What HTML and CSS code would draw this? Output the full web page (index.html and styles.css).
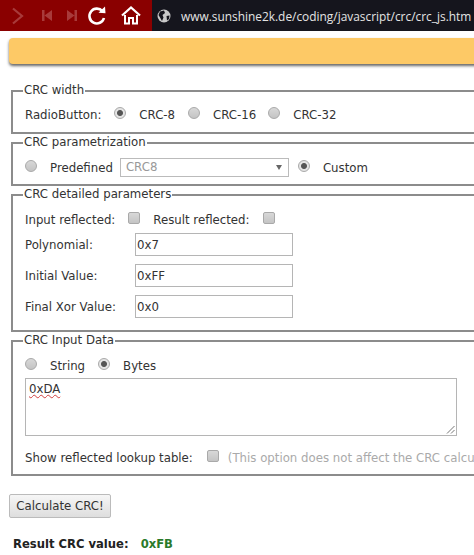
FILE: index.html
```html
<!DOCTYPE html>
<html lang="en">
<head>
    <meta charset="UTF-8">
    <title>CRC Calculator</title>
    <link rel="stylesheet" href="styles.css">
</head>
<body>
    <div class="toolbar">
        <div class="nav-buttons">
            <svg class="icon-forward" width="14" height="18" viewBox="0 0 14 18"><path d="M2 1.500 L11 9 L2 16.500" fill="none" stroke="#a83a3a" stroke-width="2.200"/></svg>
            <svg class="icon-skip-back" width="10" height="11" viewBox="0 0 10 11"><path d="M0 0h2.500v11H0zM10 0v11L2.500 5.500z" fill="#a83a3a"/></svg>
            <svg class="icon-skip-next" width="10" height="11" viewBox="0 0 10 11"><path d="M10 0H7.500v11H10zM0 0v11l7.500-5.500z" fill="#a83a3a"/></svg>
            <svg class="icon-reload" width="20" height="20" viewBox="0 0 20 20"><path d="M15.500 5.200 A7.400 7.400 0 1 0 17 12" fill="none" stroke="#fff" stroke-width="2.600"/><path d="M11.500 6.800 L18.500 7.200 L18 0.500z" fill="#fff"/></svg>
            <svg class="icon-home" width="20" height="19" viewBox="0 0 20 19"><path d="M1 9.500 L10 1.500 L19 9.500" fill="none" stroke="#fff" stroke-width="2.200"/><path d="M4 9 V17.500 H8 V12 H12 V17.500 H16 V9" fill="none" stroke="#fff" stroke-width="2"/></svg>
        </div>
        <div class="url-bar">
            <svg class="icon-globe" width="14" height="14" viewBox="0 0 14 14"><circle cx="7" cy="7" r="6.500" fill="#c9c9c9"/><path d="M3 2.500 L7 1.500 L8 4 L5.500 6 L6.500 8.500 L5 12 L3 8.500 L1.500 6z M9.500 7 L12.500 6.500 L12 10 L10 11.500z" fill="#15151d"/></svg>
            <span class="url-text">www.sunshine2k.de/coding/javascript/crc/crc_js.htm</span>
        </div>
    </div>

    <div class="page">
        <div class="banner"></div>

        <fieldset class="group group-width">
            <legend>CRC width</legend>
            <div class="row">
                <span class="row-label">RadioButton:</span>
                <input type="radio" name="width" checked>
                <label class="gap-crc8">CRC-8</label>
                <input type="radio" name="width">
                <label class="gap-crc16">CRC-16</label>
                <input type="radio" name="width">
                <label>CRC-32</label>
            </div>
        </fieldset>

        <fieldset class="group group-param">
            <legend>CRC parametrization</legend>
            <div class="row row-param">
                <input type="radio" name="param">
                <label class="gap-predefined">Predefined</label>
                <div class="select-box">
                    <span>CRC8</span>
                    <span class="select-arrow"></span>
                </div>
                <input type="radio" name="param" checked>
                <label>Custom</label>
            </div>
        </fieldset>

        <fieldset class="group group-detail">
            <legend>CRC detailed parameters</legend>
            <div class="row row-checks">
                <span>Input reflected:</span>
                <input type="checkbox">
                <span>Result reflected:</span>
                <input type="checkbox">
            </div>
            <div class="field-row">
                <label>Polynomial:</label>
                <input type="text" class="text-input" value="0x7">
            </div>
            <div class="field-row">
                <label>Initial Value:</label>
                <input type="text" class="text-input" value="0xFF">
            </div>
            <div class="field-row">
                <label>Final Xor Value:</label>
                <input type="text" class="text-input" value="0x0">
            </div>
        </fieldset>

        <fieldset class="group group-data">
            <legend>CRC Input Data</legend>
            <div class="row row-source">
                <input type="radio" name="data">
                <label class="gap-string">String</label>
                <input type="radio" name="data" checked>
                <label>Bytes</label>
            </div>
            <div class="data-box">
                <span class="spell-error">0xDA</span>
                <svg class="resize-grip" width="9" height="9" viewBox="0 0 9 9"><path d="M1 8.500 L8.500 1 M5 8.500 L8.500 5" stroke="#777" stroke-width="1"/></svg>
            </div>
            <div class="row row-lookup">
                <span>Show reflected lookup table:</span>
                <input type="checkbox">
                <span class="muted">(This option does not affect the CRC calculation, only the displayed result.)</span>
            </div>
        </fieldset>

        <button type="button" class="calc-button">Calculate CRC!</button>

        <div class="result">
            <span>Result CRC value:</span>
            <span class="result-value">0xFB</span>
        </div>
    </div>
</body>
</html>
```

FILE: styles.css
```css
* {
    box-sizing: border-box;
}

html, body {
    margin: 0;
    height: 555px;
    overflow: hidden;
}

body {
    background: #fff;
    font-family: "DejaVu Sans", Verdana, sans-serif;
    font-size: 11.750px;
    color: #333;
}

.toolbar {
    display: flex;
    height: 31px;
    background: #8a0000;
}

.nav-buttons {
    display: flex;
    align-items: center;
    width: 152px;
    flex-shrink: 0;
}

.icon-forward {
    margin-left: 11px;
}

.icon-skip-back {
    margin-left: 17px;
}

.icon-skip-next {
    margin-left: 15px;
}

.icon-reload {
    margin-left: 10px;
}

.icon-home {
    margin-left: 14px;
}

.url-bar {
    flex: 1;
    display: flex;
    align-items: center;
    background: #15151d;
    padding-left: 5px;
    white-space: nowrap;
    overflow: hidden;
}

.url-text {
    margin-left: 10px;
    color: #e4e4e4;
    font-family: "Open Sans", sans-serif;
    font-size: 11.900px;
}

.page {
    width: 760px;
    padding: 7px 0 0 9px;
}

.banner {
    height: 26px;
    background: #fdc966;
    border-radius: 4px;
    box-shadow: 0 2px 3px #666;
    margin-bottom: 19px;
}

.group {
    margin: 0 0 0 2px;
    padding: 0 0 0 12px;
    border: 2px solid #8c8c8c;
    min-width: 0;
}

.group legend {
    padding: 0 1px;
    margin-left: -2px;
    line-height: 15px;
}

.group-width {
    height: 51px;
    margin-bottom: 1px;
}

.group-param {
    height: 51px;
    margin-bottom: 1px;
}

.group-detail {
    height: 145px;
    margin-bottom: 1px;
}

.group-data {
    height: 143px;
    margin-bottom: 18px;
}

.row {
    display: flex;
    align-items: center;
    height: 18px;
    margin-top: 8px;
}

.row-param {
    margin-top: 9px;
}

.row-source {
    margin-top: 9px;
}

.row-label {
    margin-right: 13px;
}

.row label {
    margin-left: 13px;
}

.gap-crc8 {
    margin-right: 13px;
}

.gap-crc16 {
    margin-right: 12px;
}

.gap-predefined {
    margin-right: 7px;
}

.gap-string {
    margin-right: 13px;
}

input[type="radio"],
input[type="checkbox"] {
    appearance: none;
    margin: 0 0 4px 0;
    width: 12px;
    height: 12px;
    flex-shrink: 0;
    border: 1px solid #a9a9a9;
    background: linear-gradient(#d8d8d8, #c4c4c4);
}

input[type="radio"] {
    border-radius: 50%;
}

input[type="radio"]:checked {
    background: radial-gradient(circle, #555 0 2.500px, #e4e4e4 3.500px);
}

input[type="checkbox"] {
    border-radius: 2px;
}

.select-box {
    display: flex;
    align-items: center;
    justify-content: space-between;
    width: 169px;
    height: 19px;
    margin: 0 9px 2px 0;
    padding: 0 6px 0 5px;
    border: 1px solid #bbb;
    color: #999;
}

.select-arrow {
    border-left: 3px solid transparent;
    border-right: 3px solid transparent;
    border-top: 5px solid #666;
}

.row-checks {
    margin-top: 9px;
    margin-bottom: 4px;
}

.row-checks input {
    margin-left: 13px;
    margin-right: 13px;
}

.field-row {
    display: flex;
    align-items: center;
    height: 23px;
    margin-bottom: 8px;
}

.field-row label {
    width: 110px;
}

.text-input {
    width: 158px;
    height: 23px;
    padding: 0 1px;
    border: 1px solid #b5b5b5;
    font: inherit;
    color: #333;
}

.data-box {
    position: relative;
    width: 432px;
    height: 58px;
    margin-top: 3px;
    padding: 3px;
    border: 1px solid #b5b5b5;
}

.spell-error {
    text-decoration: underline wavy #d04040 1px;
}

.resize-grip {
    position: absolute;
    right: 1px;
    bottom: 1px;
}

.row-lookup {
    margin-top: 13px;
    white-space: nowrap;
}

.row-lookup input {
    margin-left: 14px;
    margin-right: 9px;
}

.muted {
    color: #aaa;
}

.calc-button {
    display: block;
    width: 102px;
    height: 24px;
    padding: 0;
    border: 1px solid #bbb;
    border-radius: 2px;
    background: linear-gradient(#f6f6f6, #dedede);
    font: inherit;
    color: #333;
}

.result {
    margin: 19px 0 0 4px;
    font-size: 11.600px;
    font-weight: bold;
    color: #222;
}

.result-value {
    margin-left: 8px;
    color: #2a7a2a;
}
```
